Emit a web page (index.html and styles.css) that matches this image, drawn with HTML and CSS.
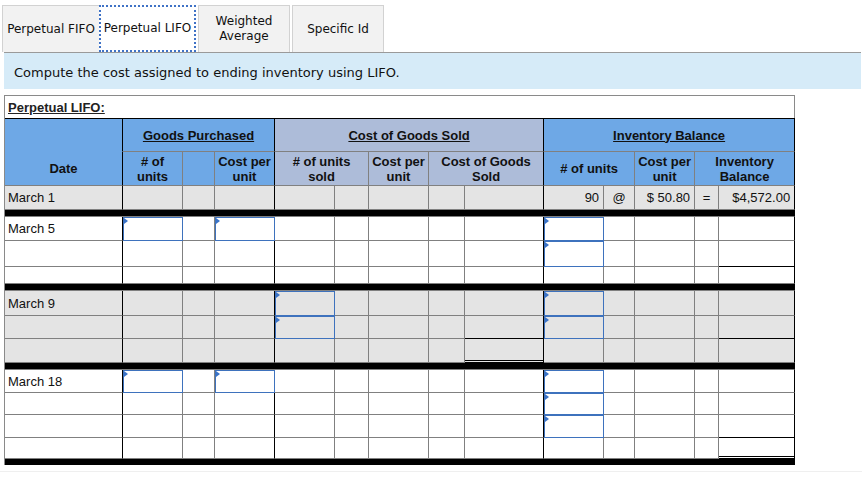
FILE: index.html
```html
<!DOCTYPE html>
<html>
<head>
<meta charset="utf-8">
<title>Perpetual LIFO</title>
<link rel="stylesheet" href="styles.css">
</head>
<body>
<div class="tabbar">
  <div class="tab t1">Perpetual FIFO</div>
  <div class="tab t2 active">Perpetual LIFO</div>
  <div class="tab t3">Weighted<br>Average</div>
  <div class="tab t4">Specific Id</div>
</div>
<div class="tabline"></div>
<div class="prompt">Compute the cost assigned to ending inventory using LIFO.</div>
<div class="panel">
  <div class="caption">Perpetual LIFO:</div>
  <table class="grid">
    <colgroup>
      <col class="w118"><col class="w60"><col class="w32"><col class="w60">
      <col class="w60"><col class="w34"><col class="w60"><col class="w36"><col class="w79">
      <col class="w60"><col class="w31"><col class="w60"><col class="w24"><col class="w76">
    </colgroup>
    <tr class="h1">
      <td class="hd blue ge nob"></td>
      <td colspan="3" class="hd blue ge"><span class="u">Goods Purchased</span></td>
      <td colspan="5" class="hd slate ge"><span class="u">Cost of Goods Sold</span></td>
      <td colspan="5" class="hd blue ge"><span class="u">Inventory Balance</span></td>
    </tr>
    <tr class="h2">
      <td class="hd blue ge">Date</td>
      <td class="hd blue"># of<br>units</td>
      <td class="hd blue"></td>
      <td class="hd blue ge">Cost per<br>unit</td>
      <td colspan="2" class="hd slate"># of units<br>sold</td>
      <td class="hd slate">Cost per<br>unit</td>
      <td colspan="2" class="hd slate ge">Cost of Goods<br>Sold</td>
      <td colspan="2" class="hd blue"># of units</td>
      <td class="hd blue">Cost per<br>unit</td>
      <td colspan="2" class="hd blue ge">Inventory<br>Balance</td>
    </tr>

    <tr class="shade r24">
      <td class="d ge">March 1</td><td></td><td></td><td class="ge"></td>
      <td></td><td></td><td></td><td></td><td class="ge"></td>
      <td class="num">90</td><td class="mid">@</td><td class="num">$ 50.80</td><td class="mid">=</td><td class="num ge">$4,572.00</td>
    </tr>
    <tr class="sep"><td colspan="14"></td></tr>

    <tr class="r24">
      <td class="d ge">March 5</td><td class="in"><span class="flag"></span></td><td></td><td class="ge in"><span class="flag"></span></td>
      <td></td><td></td><td></td><td></td><td class="ge"></td>
      <td class="in"><span class="flag"></span></td><td></td><td></td><td></td><td class="ge"></td>
    </tr>
    <tr class="r26">
      <td class="ge"></td><td></td><td></td><td class="ge"></td>
      <td></td><td></td><td></td><td></td><td class="ge"></td>
      <td class="in"><span class="flag"></span></td><td></td><td></td><td></td><td class="ge ul"></td>
    </tr>
    <tr class="r17">
      <td class="ge"></td><td></td><td></td><td class="ge"></td>
      <td></td><td></td><td></td><td></td><td class="ge"></td>
      <td></td><td></td><td></td><td></td><td class="ge"></td>
    </tr>
    <tr class="sep"><td colspan="14"></td></tr>

    <tr class="shade r25">
      <td class="d ge">March 9</td><td></td><td></td><td class="ge"></td>
      <td class="in"><span class="flag"></span></td><td></td><td></td><td></td><td class="ge"></td>
      <td class="in"><span class="flag"></span></td><td></td><td></td><td></td><td class="ge"></td>
    </tr>
    <tr class="shade r23">
      <td class="ge"></td><td></td><td></td><td class="ge"></td>
      <td class="in"><span class="flag"></span></td><td></td><td></td><td></td><td class="ge ul"></td>
      <td class="in"><span class="flag"></span></td><td></td><td></td><td></td><td class="ge ul"></td>
    </tr>
    <tr class="shade r24">
      <td class="ge"></td><td></td><td></td><td class="ge"></td>
      <td></td><td></td><td></td><td></td><td class="ge dbl"></td>
      <td></td><td></td><td></td><td></td><td class="ge"></td>
    </tr>
    <tr class="sep"><td colspan="14"></td></tr>

    <tr class="r23">
      <td class="d ge">March 18</td><td class="in"><span class="flag"></span></td><td></td><td class="ge in"><span class="flag"></span></td>
      <td></td><td></td><td></td><td></td><td class="ge"></td>
      <td class="in"><span class="flag"></span></td><td></td><td></td><td></td><td class="ge"></td>
    </tr>
    <tr class="r22">
      <td class="ge"></td><td></td><td></td><td class="ge"></td>
      <td></td><td></td><td></td><td></td><td class="ge"></td>
      <td class="in"><span class="flag"></span></td><td></td><td></td><td></td><td class="ge"></td>
    </tr>
    <tr class="r23">
      <td class="ge"></td><td></td><td></td><td class="ge"></td>
      <td></td><td></td><td></td><td></td><td class="ge"></td>
      <td class="in"><span class="flag"></span></td><td></td><td></td><td></td><td class="ge ul"></td>
    </tr>
    <tr class="r21">
      <td class="ge"></td><td></td><td></td><td class="ge"></td>
      <td></td><td></td><td></td><td></td><td class="ge"></td>
      <td></td><td></td><td></td><td></td><td class="ge dbl"></td>
    </tr>
    <tr class="sep last"><td colspan="14"></td></tr>
  </table>
</div>
<div class="footline"></div>
</body>
</html>
```
FILE: styles.css
```css
html, body {
  margin: 0;
  padding: 0;
  background: #fff;
}
body {
  font-family: "DejaVu Sans", Verdana, sans-serif;
  color: #000;
}

/* tabs */
.tabbar {
  display: flex;
  align-items: flex-start;
  padding: 5px 0 0 2px;
  height: 47px;
}
.tab {
  box-sizing: border-box;
  height: 47px;
  display: flex;
  align-items: center;
  justify-content: center;
  text-align: center;
  font-size: 12px;
  line-height: 15px;
  background: #f2f2f2;
  border: 1px solid #d2d2d2;
  border-bottom: none;
  color: #111;
  white-space: nowrap;
}
.t1 { width: 98px; }
.t2 { width: 97px; margin-left: -1px; }
.t3 { width: 92px; margin-left: 2px; }
.t4 { width: 92px; margin-left: 2px; }
.tab.active {
  background: #fff;
  border: 2px dotted #3f72c6;
}
.tabline {
  height: 1px;
  background: #9a9a9a;
  margin: 0 1px 0 4px;
}

/* prompt */
.prompt {
  margin-left: 4px;
  margin-right: 1px;
  height: 36px;
  background: #d6ebf8;
  display: flex;
  align-items: center;
  padding-left: 10px;
  padding-top: 2px;
  box-sizing: border-box;
  font-size: 13px;
  color: #111;
}

/* panel */
.panel {
  box-sizing: border-box;
  width: 791px;
  margin: 6px 0 0 4px;
  border: 1px solid #8a8a8a;
  border-bottom: none;
}
.caption {
  height: 22px;
  box-sizing: border-box;
  padding: 4px 0 0 3px;
  font-family: "Liberation Sans", Arial, sans-serif;
  font-weight: bold;
  font-size: 13px;
  text-decoration: underline;
  color: #222;
}

.grid {
  width: 790px;
  margin-right: -1px;
  table-layout: fixed;
  border-collapse: separate;
  border-spacing: 0;
  border-top: 1px solid #000;
  font-family: "Liberation Sans", Arial, sans-serif;
  font-size: 13px;
  line-height: 15px;
}
.w118 { width: 118px; }
.w79 { width: 79px; }
.w76 { width: 76px; }
.w60 { width: 60px; }
.w36 { width: 36px; }
.w34 { width: 34px; }
.w32 { width: 32px; }
.w31 { width: 31px; }
.w24 { width: 24px; }

.grid td {
  box-sizing: border-box;
  padding: 0;
  border-right: 1px solid #808080;
  border-bottom: 1px solid #808080;
  vertical-align: middle;
  color: #111;
}
.grid td.ge { border-right-color: #000; }
.grid td.nob { border-bottom-color: #6ea8e6; }

.h1 td { height: 33px; }
.h2 td { height: 34px; }
.hd {
  text-align: center;
  font-weight: bold;
  color: #222;
}
.u { text-decoration: underline; }
.blue { background: #6ea8e6; }
.slate { background: #adbcd9; }

.shade td { background: #e4e4e4; }
.r17 td { height: 17px; }
.r21 td { height: 21px; }
.r22 td { height: 22px; }
.r23 td { height: 23px; }
.r24 td { height: 24px; }
.r25 td { height: 25px; }
.r26 td { height: 26px; }

.d { padding-left: 3px !important; }
.num { text-align: right; padding-right: 4px !important; }
.mid { text-align: center; }

.grid td.in {
  vertical-align: top;
  border-right-color: #3e72bd;
  border-bottom-color: #3e72bd;
  box-shadow: inset 1px 1px 0 #3e72bd;
  padding: 1px 0 0 1px;
  line-height: 6px;
}
.flag {
  display: inline-block;
  vertical-align: top;
  width: 0;
  height: 0;
  border-left: 4px solid #3a73c8;
  border-top: 3px solid transparent;
  border-bottom: 3px solid transparent;
}

.grid td.ul { border-bottom-color: #000; }
.grid td.dbl { border-bottom: 3px double #000; }

.sep td {
  height: 7px;
  background: #000;
  border-right-color: #000;
}
.sep.last td {
  height: 6px;
  border-bottom: none;
}

.footline {
  margin-top: 6px;
  height: 1px;
  background: #efefef;
}
```
